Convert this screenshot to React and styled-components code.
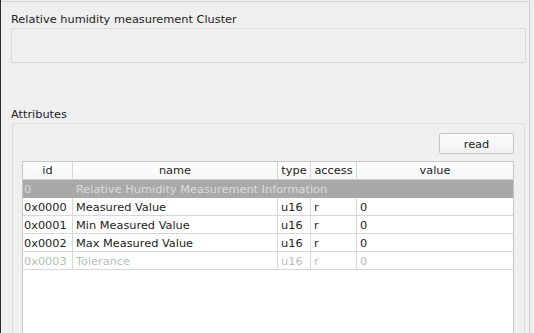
import React from "react";
import styled, { createGlobalStyle } from "styled-components";

const Global = createGlobalStyle`
  html, body { margin: 0; padding: 0; background: #efefef; }
  body { font-family: "DejaVu Sans", sans-serif; font-size: 11.33px; color: #232323; }
`;

const Window = styled.div`
  width: 534px;
  height: 333px;
  box-sizing: border-box;
  border-left: 1px solid #2e2e2e;
  padding-top: 1px;
  overflow: hidden;
`;

const Frame = styled.div`
  box-sizing: border-box;
  width: 529px;
  height: 332px;
  border-top: 1px solid #d2d2d2;
  border-right: 1px solid #d2d2d2;
  padding: 8px 3px 0 10px;
  display: flex;
  flex-direction: column;
`;

const Label = styled.div`
  height: 18px;
  line-height: 18px;
  white-space: nowrap;
`;

const EmptyBox = styled.div`
  height: 33px;
  border: 1px solid #dcd8dc;
  border-radius: 2px;
`;

const Spacer = styled.div`
  height: 42px;
`;

const AttrBox = styled.div`
  flex: 1;
  margin: 0 1px 0 1px;
  border: 1px solid #dcdcdc;
  border-bottom: none;
  border-radius: 2px 2px 0 0;
  padding: 9px 10px 0 9px;
  display: flex;
  flex-direction: column;
`;

const ButtonRow = styled.div`
  display: flex;
  justify-content: flex-end;
  height: 21px;
  margin-bottom: 7px;
`;

const Button = styled.button`
  width: 75px;
  height: 21px;
  box-sizing: border-box;
  border: 1px solid #c4c4c4;
  border-radius: 2px;
  background: linear-gradient(#fbfbfb, #f1f1f1);
  font-family: "DejaVu Sans", sans-serif;
  font-size: 11.33px;
  color: #232323;
  padding: 0;
`;

const Table = styled.div`
  flex: 1;
  background: #ffffff;
  border: 1px solid #c6c6c6;
  border-bottom: none;
  display: grid;
  grid-template-columns: 50px 205px 33px 46px 1fr;
  grid-auto-rows: 18px;
  align-content: start;
`;

const Head = styled.div`
  background: linear-gradient(#ffffff, #f6f6f6);
  border-right: 1px solid #d6d6d6;
  border-bottom: 1px solid #cfcfcf;
  text-align: center;
  line-height: 17px;
  white-space: nowrap;
  &:nth-child(5) { border-right: none; }
`;

const Cell = styled.div`
  box-sizing: border-box;
  padding-left: ${(p) => (p.$first ? 1 : 3)}px;
  padding-top: 1px;
  line-height: 17px;
  white-space: nowrap;
  overflow: hidden;
  border-bottom: 1px solid ${(p) => (p.$sel ? "#a9a9a9" : "#d8d8d8")};
  border-right: 1px solid ${(p) => (p.$sel ? "#a9a9a9" : "#d8d8d8")};
  background: ${(p) => (p.$sel ? "#a9a9a9" : "#ffffff")};
  color: ${(p) => (p.$sel ? "#dcdcdc" : p.$disabled ? "#b4c0b4" : "#232323")};
  grid-column: ${(p) => (p.$wide ? "span 4" : "auto")};
  ${(p) => (p.$last ? "border-right: none;" : "")}
`;

const rows = [
  ["0x0000", "Measured Value", "u16", "r", "0", false],
  ["0x0001", "Min Measured Value", "u16", "r", "0", false],
  ["0x0002", "Max Measured Value", "u16", "r", "0", false],
  ["0x0003", "Tolerance", "u16", "r", "0", true],
];

export default function App() {
  return (
    <>
      <Global />
      <Window>
        <Frame>
          <Label>Relative humidity measurement Cluster</Label>
          <EmptyBox />
          <Spacer />
          <Label>Attributes</Label>
          <AttrBox>
            <ButtonRow>
              <Button>read</Button>
            </ButtonRow>
            <Table>
              <Head>id</Head>
              <Head>name</Head>
              <Head>type</Head>
              <Head>access</Head>
              <Head>value</Head>
              <Cell $first $sel>0</Cell>
              <Cell $sel $wide $last>Relative Humidity Measurement Information</Cell>
              {rows.map((r) =>
                r.slice(0, 5).map((v, i) => (
                  <Cell key={r[0] + i} $first={i === 0} $last={i === 4} $disabled={r[5]}>
                    {v}
                  </Cell>
                ))
              )}
            </Table>
          </AttrBox>
        </Frame>
      </Window>
    </>
  );
}
